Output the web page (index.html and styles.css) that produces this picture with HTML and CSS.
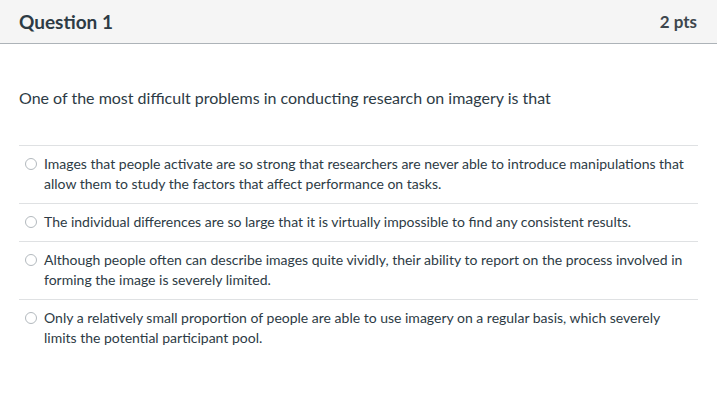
FILE: index.html
```html
<!DOCTYPE html>
<html>
<head>
<meta charset="utf-8">
<link rel="stylesheet" href="styles.css">
</head>
<body>
<div class="question">
  <div class="header">
    <span class="title">Question 1</span>
    <span class="points">2 pts</span>
  </div>
  <div class="content">
    <p class="question-text">One of the most difficult problems in conducting research on imagery is that</p>
    <div class="answers">
      <label class="answer"><span class="radio"></span><span class="answer-text">Images that people activate are so strong that researchers are never able to introduce manipulations that allow them to study the factors that affect performance on tasks.</span></label>
      <label class="answer"><span class="radio"></span><span class="answer-text">The individual differences are so large that it is virtually impossible to find any consistent results.</span></label>
      <label class="answer"><span class="radio"></span><span class="answer-text">Although people often can describe images quite vividly, their ability to report on the process involved in forming the image is severely limited.</span></label>
      <label class="answer"><span class="radio"></span><span class="answer-text">Only a relatively small proportion of people are able to use imagery on a regular basis, which severely limits the potential participant pool.</span></label>
    </div>
  </div>
</div>
</body>
</html>
```

FILE: styles.css
```css
html, body {
  margin: 0;
  padding: 0;
  background: #ffffff;
}
body {
  font-family: Lato, "Open Sans", sans-serif;
  color: #2d3b45;
}
.header {
  display: flex;
  justify-content: space-between;
  align-items: center;
  height: 43px;
  padding: 0 20px 0 19px;
  background: #f5f5f5;
  border-bottom: 1px solid #adb3b8;
}
.title {
  font-size: 19px;
  font-weight: 700;
}
.points {
  font-size: 17px;
  font-weight: 700;
  color: #3d464d;
}
.content {
  padding: 0 19px;
}
.question-text {
  margin: 44px 0 37px 0;
  font-size: 16px;
  line-height: 20px;
}
.answers {
  display: flex;
  flex-direction: column;
}
.answer {
  display: flex;
  align-items: flex-start;
  gap: 7px;
  padding: 8px 8px 9px 6px;
  border-top: 1px solid #dfe1e3;
  font-size: 14px;
  line-height: 20px;
}
.radio {
  flex: none;
  box-sizing: border-box;
  width: 12px;
  height: 12px;
  margin-top: 4px;
  border: 1px solid #b3b9be;
  border-radius: 50%;
  background: #fff;
}
```
